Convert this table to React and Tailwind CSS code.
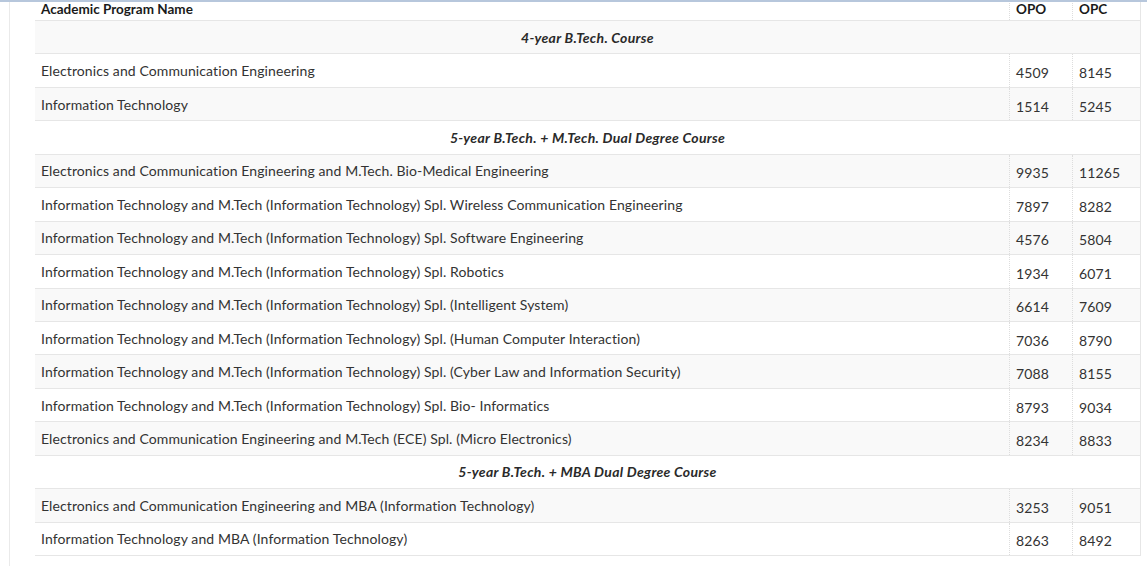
import React from "react";

const groups = [
  {
    title: "4-year B.Tech. Course",
    rows: [
      ["Electronics and Communication Engineering", "4509", "8145"],
      ["Information Technology", "1514", "5245"],
    ],
  },
  {
    title: "5-year B.Tech. + M.Tech. Dual Degree Course",
    rows: [
      ["Electronics and Communication Engineering and M.Tech. Bio-Medical Engineering", "9935", "11265"],
      ["Information Technology and M.Tech (Information Technology) Spl. Wireless Communication Engineering", "7897", "8282"],
      ["Information Technology and M.Tech (Information Technology) Spl. Software Engineering", "4576", "5804"],
      ["Information Technology and M.Tech (Information Technology) Spl. Robotics", "1934", "6071"],
      ["Information Technology and M.Tech (Information Technology) Spl. (Intelligent System)", "6614", "7609"],
      ["Information Technology and M.Tech (Information Technology) Spl. (Human Computer Interaction)", "7036", "8790"],
      ["Information Technology and M.Tech (Information Technology) Spl. (Cyber Law and Information Security)", "7088", "8155"],
      ["Information Technology and M.Tech (Information Technology) Spl. Bio- Informatics", "8793", "9034"],
      ["Electronics and Communication Engineering and M.Tech (ECE) Spl. (Micro Electronics)", "8234", "8833"],
    ],
  },
  {
    title: "5-year B.Tech. + MBA Dual Degree Course",
    rows: [
      ["Electronics and Communication Engineering and MBA (Information Technology)", "3253", "9051"],
      ["Information Technology and MBA (Information Technology)", "8263", "8492"],
    ],
  },
];

export default function App() {
  const items = [];
  groups.forEach((g) => {
    items.push({ type: "g", title: g.title });
    g.rows.forEach((r) => items.push({ type: "r", r }));
  });
  return (
    <div
      className="w-[1147px] h-[566px] overflow-hidden bg-white border-t-2 border-[#b7c7dc] text-[#333]"
      style={{ fontFamily: "Lato, 'Open Sans', sans-serif" }}
    >
      <div className="ml-[9px] border-l border-[#eaeaea] h-full pl-[25px] pr-[6px] flex flex-col">
        <div className="-mt-[14px] border-r border-[#e6e6e6]">
          <div className="flex h-[33px] items-end border-b border-[#e6e6e6] text-[13.5px] font-bold text-[#1a1a1a] leading-[16px]">
            <div className="flex-1 pl-[6px] pb-[3px]">Academic Program Name</div>
            <div className="w-[63px] pl-[6px] pb-[3px] border-l border-dotted border-[#ddd] h-full flex items-end">OPO</div>
            <div className="w-[68px] pl-[6px] pb-[3px] border-l border-dotted border-[#ddd] h-full flex items-end">OPC</div>
          </div>
          {items.map((it, i) => {
            const bg = i % 2 === 0 ? "bg-[#f9f9f9]" : "bg-white";
            if (it.type === "g") {
              return (
                <div
                  key={i}
                  className={`h-[33.45px] flex items-center justify-center border-b border-[#e6e6e6] text-[14px] font-bold italic tracking-[0.3px] text-[#2a2a2a] ${bg}`}
                >
                  {it.title}
                </div>
              );
            }
            return (
              <div key={i} className={`h-[33.45px] flex border-b border-[#e6e6e6] text-[14px] tracking-[0.1px] ${bg}`}>
                <div className="flex-1 pl-[6px] flex items-center">{it.r[0]}</div>
                <div className="w-[63px] pl-[6px] flex items-center border-l border-dotted border-[#ddd] pt-[4px]">{it.r[1]}</div>
                <div className="w-[68px] pl-[6px] flex items-center border-l border-dotted border-[#ddd] pt-[4px]">{it.r[2]}</div>
              </div>
            );
          })}
        </div>
      </div>
    </div>
  );
}
